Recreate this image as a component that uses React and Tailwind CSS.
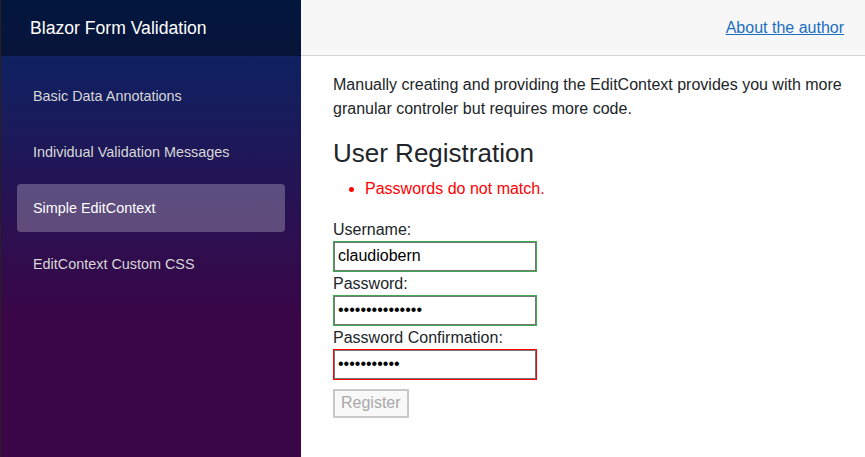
import React from "react";

const navItems = [
  "Basic Data Annotations",
  "Individual Validation Messages",
  "Simple EditContext",
  "EditContext Custom CSS",
];

const Field = ({ label, value, type = "text", valid = true }) => (
  <>
    <label className="block leading-[23px]">{label}</label>
    <input
      type={type}
      readOnly
      value={value}
      className={`block w-[202px] h-[29px] ml-px my-px border border-[#767676] bg-white px-[3px] text-[16px] text-black outline outline-1 ${
        valid ? "outline-[#3faa4f]" : "outline-[#ff0000]"
      }`}
      style={{ fontFamily: "'Liberation Sans', Arial, sans-serif" }}
    />
  </>
);

const App = () => {
  return (
    <div
      className="flex w-[865px] h-[457px] overflow-hidden bg-white text-[16px] text-[#212529]"
      style={{ fontFamily: "'Liberation Sans', Arial, sans-serif" }}
    >
      {/* Sidebar */}
      <div className="w-[301px] shrink-0 flex flex-col border-l border-[#2a1f1f] bg-[linear-gradient(180deg,#052767_0%,#3a0647_70%)]">
        <div className="h-[56px] flex items-center pl-[29px] bg-black/40 text-white text-[17.6px]">
          Blazor Form Validation
        </div>
        <ul className="pt-4">
          {navItems.map((item, i) => (
            <li key={item} className="px-4 pb-2 text-[14.4px]">
              <div
                className={`h-12 leading-[48px] pl-4 rounded ${
                  i === 2 ? "bg-white/25 text-white" : "text-[#d7d7d7]"
                }`}
              >
                {item}
              </div>
            </li>
          ))}
        </ul>
      </div>

      {/* Main */}
      <div className="flex-1 flex flex-col">
        <div className="h-[56px] shrink-0 flex items-center justify-end pr-[21px] bg-[#f7f7f7] border-b border-[#d6d5d5]">
          <a href="#" className="text-[#1b6ec2] underline">
            About the author
          </a>
        </div>

        <div className="pl-8 pr-3 pt-[17px]">
          <p className="leading-6 mb-4">
            Manually creating and providing the EditContext provides you with more
            granular controler but requires more code.
          </p>
          <h3 className="text-[26px] leading-[33.6px] font-normal mb-[6px]">User Registration</h3>
          <ul className="list-disc pl-8 mb-[17px] text-[#ff0000] leading-6">
            <li>Passwords do not match.</li>
          </ul>

          <Field label="Username:" value="claudiobern" />
          <Field label="Password:" value="passwordpass123" type="password" />
          <Field label="Password Confirmation:" value="password123" type="password" valid={false} />

          <button
            disabled
            className="mt-[9px] h-[29px] px-[6px] border-2 border-[#c8c8c8] bg-[#f8f8f8] text-[#a8a8a8] text-[16px]"
          >
            Register
          </button>
        </div>
      </div>
    </div>
  );
};

export default App;
